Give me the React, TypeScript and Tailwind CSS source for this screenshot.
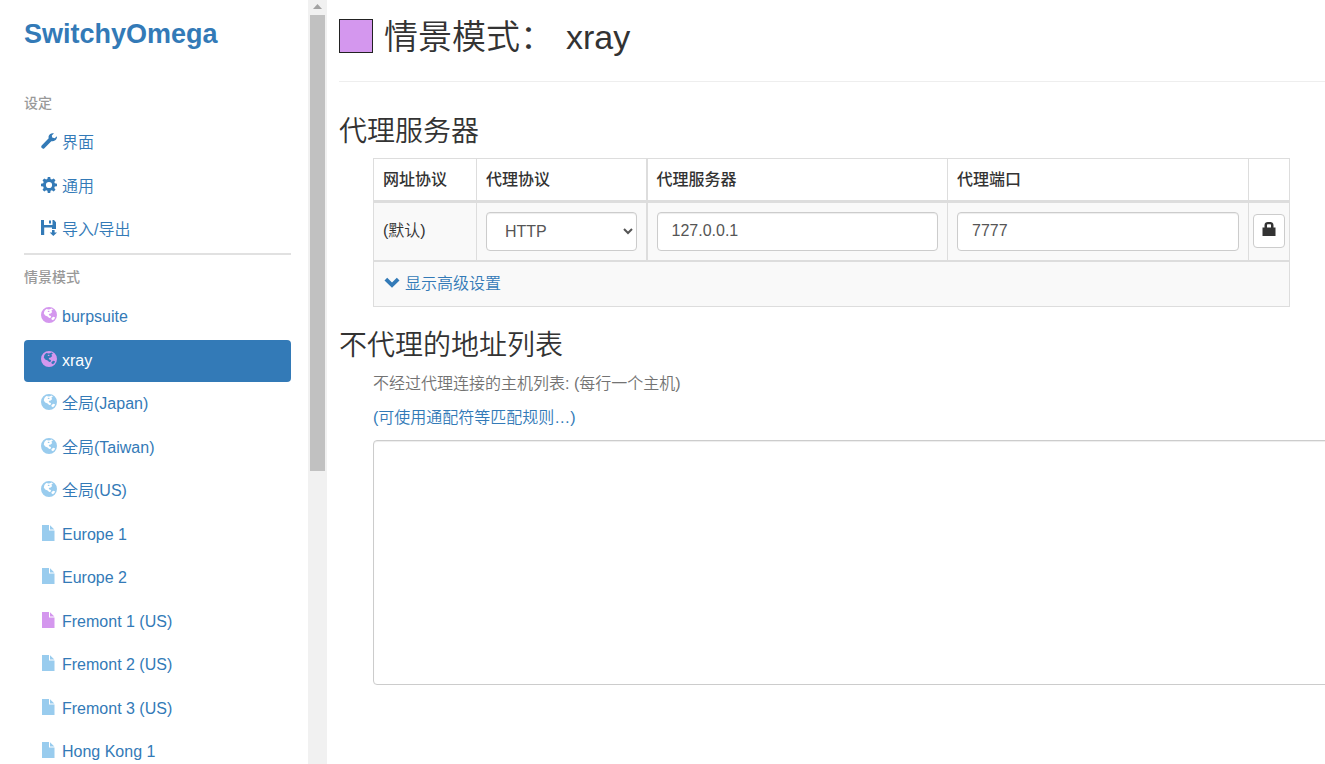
import { useState, type ReactNode } from 'react';

type IconName = 'globe' | 'file';

const BLUE = 'text-[#99ccee]';
const PINK = 'text-[#d497ee]';

const profiles: { name: string; icon: IconName; color: string }[] = [
  { name: 'burpsuite', icon: 'globe', color: PINK },
  { name: 'xray', icon: 'globe', color: PINK },
  { name: '全局(Japan)', icon: 'globe', color: BLUE },
  { name: '全局(Taiwan)', icon: 'globe', color: BLUE },
  { name: '全局(US)', icon: 'globe', color: BLUE },
  { name: 'Europe 1', icon: 'file', color: BLUE },
  { name: 'Europe 2', icon: 'file', color: BLUE },
  { name: 'Fremont 1 (US)', icon: 'file', color: PINK },
  { name: 'Fremont 2 (US)', icon: 'file', color: BLUE },
  { name: 'Fremont 3 (US)', icon: 'file', color: BLUE },
  { name: 'Hong Kong 1', icon: 'file', color: BLUE },
];

function Icon({ children }: { children: ReactNode }) {
  return (
    <svg viewBox="0 0 16 16" fill="currentColor" aria-hidden="true" className="size-4 shrink-0">
      {children}
    </svg>
  );
}

function WrenchIcon() {
  return (
    <Icon>
      <path d="M16 3.200 13.600 5.200 11.200 4.600 10.800 2.500 13 .3C10.600-.3 8.400.8 7.700 3c-.2.800-.2 1.500 0 2.200L.7 12.500c-.600.700-.600 1.600-.1 2.200l.6.600c.600.600 1.500.600 2.200-.1l6.900-7c1.300.300 2.700.1 3.900-.9 1.300-1 2-2.500 1.800-4.100z" />
    </Icon>
  );
}

function CogIcon() {
  return (
    <Icon>
      <path
        fillRule="evenodd"
        d="M6.8 0h2.400l.4 2.100 1.300.5 1.800-1.200 1.800 1.800-1.200 1.800.5 1.300 2.200.5v2.400l-2.200.4-.5 1.300 1.200 1.900-1.800 1.700-1.800-1.200-1.300.5-.4 2.200H6.800l-.4-2.200-1.300-.5-1.800 1.200-1.800-1.700 1.200-1.900-.5-1.300L0 9.200V6.800l2.200-.5.5-1.300-1.200-1.800 1.800-1.800 1.800 1.200 1.300-.5zM8 4.900a3.100 3.100 0 1 0 0 6.200 3.100 3.100 0 0 0 0-6.200z"
      />
    </Icon>
  );
}

function SaveIcon() {
  return (
    <Icon>
      <path
        fillRule="evenodd"
        d="M0 0h3v5h8.500V0h1.500L15 2.300V9h-4V7.500H3.200V15H0zM8 .5h2v3H8zM11 10h2.600v2.500H16L12.300 16 8.700 12.500H11z"
      />
    </Icon>
  );
}

function GlobeIcon() {
  return (
    <Icon>
      <path
        fillRule="evenodd"
        d="M8 0a8 8 0 1 1 0 16A8 8 0 0 1 8 0zM5.200 2 8 2.400 10.800 1.500 11.900 2.600 10.300 3.800 11.200 5 9.700 6.500 7.700 7 8.300 8.400 10 9 9.700 10.800 8.200 11 6.600 9.400 4.200 8.600 2.800 6.500 3.400 4zM7.200 3.700 6.600 4.900 8 5 8.800 4zM12.200 9.700 10.400 11.200 10.600 12.600 12 13.200 13.700 11.400 14 10.200z"
      />
    </Icon>
  );
}

function FileIcon() {
  return (
    <Icon>
      <path d="M1 0h7v5.500h5.500V16H1zM9 .2 13.400 4.500H9z" />
    </Icon>
  );
}

function ChevronDownIcon() {
  return (
    <Icon>
      <path d="M3.200 2.800 8 7.400l4.800-4.600L15.500 5.400 8 12.800.5 5.400z" />
    </Icon>
  );
}

function LockIcon() {
  return (
    <Icon>
      <path
        fillRule="evenodd"
        d="M1.500 6.500h2V4.200C3.500 2.200 5 1 6.800 1h2.400c1.800 0 3.300 1.200 3.300 3.200v2.300h2V15h-13zM6 6.500h4V4.300c0-.6-.4-1-1-1H7c-.6 0-1 .4-1 1z"
      />
    </Icon>
  );
}

function NavItem({
  icon,
  label,
  active = false,
  onClick,
}: {
  icon: ReactNode;
  label: string;
  active?: boolean;
  onClick?: () => void;
}) {
  return (
    <li className="odd:mb-0.5 even:mb-px">
      <a
        href="#"
        onClick={onClick}
        className={`flex h-[42px] items-center gap-[5px] rounded pl-[17px] ${
          active ? 'bg-[#337ab7] text-white' : 'text-[#337ab7] hover:bg-[#eee]'
        }`}
      >
        <span className="pb-1">{icon}</span>
        {label}
      </a>
    </li>
  );
}

export default function App() {
  const [current, setCurrent] = useState('xray');
  const [scheme, setScheme] = useState('HTTP');
  const [host, setHost] = useState('127.0.0.1');
  const [port, setPort] = useState('7777');
  const [bypass, setBypass] = useState('');

  const field =
    'h-[39px] w-full rounded border border-[#ccc] bg-white px-3.5 text-base text-[#555] shadow-[inset_0_1px_1px_rgba(0,0,0,0.075)]';

  return (
    <div
      lang="zh-CN"
      className="flex h-screen overflow-hidden bg-white font-['Liberation_Sans','Noto_Sans_CJK_SC',sans-serif] text-base font-[350] text-[#333]"
    >
      {/* Sidebar */}
      <aside className="flex w-[327px] shrink-0">
        <nav className="min-w-0 flex-1 overflow-hidden pr-[17px] pl-6">
          <h1 className="pt-4 text-[27px] leading-9 font-bold">
            <a href="#" className="text-[#337ab7]">SwitchyOmega</a>
          </h1>
          <h2 className="mt-[39px] text-sm leading-6 font-medium text-[#999]">设定</h2>
          <ul className="mt-[7px] border-b-2 border-[#e1e1e1]">
            <NavItem icon={<WrenchIcon />} label="界面" />
            <NavItem icon={<CogIcon />} label="通用" />
            <NavItem icon={<SaveIcon />} label="导入/导出" />
          </ul>
          <h2 className="mt-2.5 text-sm leading-6 font-medium text-[#999]">情景模式</h2>
          <ul className="mt-[7px]">
            {profiles.map((p) => (
              <NavItem
                key={p.name}
                icon={<span className={p.color}>{p.icon === 'globe' ? <GlobeIcon /> : <FileIcon />}</span>}
                label={p.name}
                active={p.name === current}
                onClick={() => setCurrent(p.name)}
              />
            ))}
          </ul>
        </nav>
        {/* Scrollbar */}
        <div className="flex w-[19px] flex-col items-center bg-[#f1f1f1]">
          <svg viewBox="0 0 19 15" className="h-[15px] w-[19px] shrink-0" fill="#a3a3a3" aria-hidden="true">
            <path d="M9.500 4 14 9H5z" />
          </svg>
          <div className="h-[456px] w-[15px] bg-[#c1c1c1]" />
        </div>
      </aside>

      {/* Profile */}
      <main className="min-w-0 flex-1 overflow-hidden pl-3">
        <header className="flex h-[82px] items-start border-b border-[#eee] pt-[13px]">
          <span className="mt-1.5 mr-[11px] size-[34px] border border-[#222] bg-[#d497ee]" />
          <h2 className="flex gap-3 text-[34px] leading-[48px]">
            <span>情景模式：</span>
            <span>{current}</span>
          </h2>
        </header>

        <section>
          <h3 className="mt-[30px] text-[28px] leading-10">代理服务器</h3>
          <table className="mt-1.5 ml-[34px] w-full max-w-[917px] table-fixed border-collapse border border-[#ddd]">
            <colgroup>
              <col className="w-[103px]" />
              <col className="w-[170px]" />
              <col />
              <col />
              <col className="w-[41px]" />
            </colgroup>
            <thead>
              <tr className="h-[43px] border-b-3 border-[#ddd] text-left">
                <th className="border-r border-[#ddd] px-[9px] font-medium">网址协议</th>
                <th className="border-r-2 border-[#ddd] px-[9px] font-medium">代理协议</th>
                <th className="border-r border-[#ddd] px-[9px] font-medium">代理服务器</th>
                <th className="border-r border-[#ddd] px-[9px] font-medium">代理端口</th>
                <th />
              </tr>
            </thead>
            <tbody className="bg-[#f9f9f9]">
              <tr className="h-[59px] border-b-2 border-[#ddd]">
                <td className="border-r border-[#ddd] px-[9px]">(默认)</td>
                <td className="border-r-2 border-[#ddd] px-[9px]">
                  <select
                    aria-label="代理协议"
                    value={scheme}
                    onChange={(e) => setScheme(e.target.value)}
                    className={field}
                  >
                    <option>HTTP</option>
                    <option>HTTPS</option>
                    <option>SOCKS4</option>
                    <option>SOCKS5</option>
                  </select>
                </td>
                <td className="border-r border-[#ddd] px-[9px]">
                  <input aria-label="代理服务器" value={host} onChange={(e) => setHost(e.target.value)} className={field} />
                </td>
                <td className="border-r border-[#ddd] px-[9px]">
                  <input aria-label="代理端口" value={port} onChange={(e) => setPort(e.target.value)} className={field} />
                </td>
                <td>
                  <button
                    aria-label="代理登录"
                    className="mx-auto flex h-[34px] w-8 items-center justify-center rounded border border-[#ccc] bg-white pb-1 hover:bg-[#e6e6e6]"
                  >
                    <LockIcon />
                  </button>
                </td>
              </tr>
              <tr className="h-[46px]">
                <td colSpan={5} className="px-2.5">
                  <a href="#" className="flex w-fit items-center gap-[5px] text-[#337ab7]">
                    <span className="pb-0.5"><ChevronDownIcon /></span>
                    显示高级设置
                  </a>
                </td>
              </tr>
            </tbody>
          </table>
        </section>

        <section>
          <h3 className="mt-[19px] text-[28px] leading-10">不代理的地址列表</h3>
          <div className="ml-[34px]">
            <p id="bypass-help" className="mt-1.5 leading-6 text-[#737373]">
              不经过代理连接的主机列表: (每行一个主机)
            </p>
            <p className="mt-2.5 leading-6">
              <a href="#" className="text-[#337ab7]">(可使用通配符等匹配规则…)</a>
            </p>
            <textarea
              aria-labelledby="bypass-help"
              value={bypass}
              onChange={(e) => setBypass(e.target.value)}
              className="mt-2.5 block h-[245px] w-[calc(100%+16px)] resize-none rounded border border-[#ccc] px-3.5 py-2 text-[#555] shadow-[inset_0_1px_1px_rgba(0,0,0,0.075)]"
            />
          </div>
        </section>
      </main>
    </div>
  );
}
